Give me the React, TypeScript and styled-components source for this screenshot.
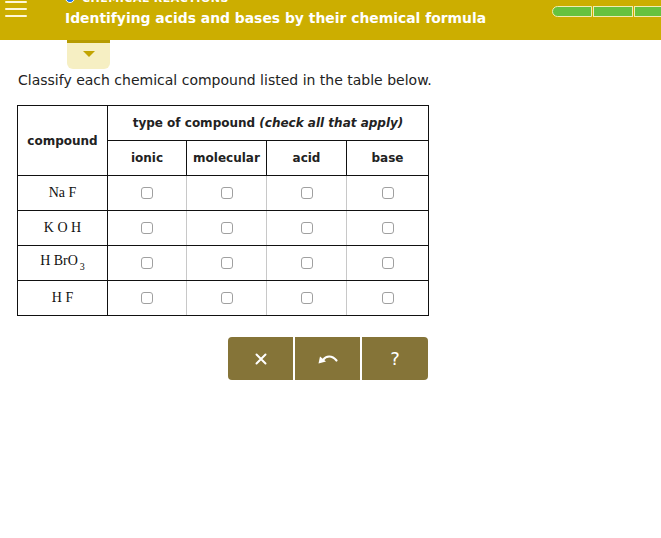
import React from "react";
import styled, { createGlobalStyle } from "styled-components";

const Global = createGlobalStyle`
  html, body { margin: 0; padding: 0; background: #fff; }
  body { font-family: "DejaVu Sans", Verdana, sans-serif; color: #222; }
`;

const Page = styled.div`
  width: 661px;
  height: 538px;
  display: flex;
  flex-direction: column;
  overflow: hidden;
`;

const Header = styled.header`
  height: 40px;
  background: #ccae00;
  display: flex;
  overflow: hidden;
  position: relative;
`;

const Burger = styled.div`
  width: 22px;
  padding: 1px 0 0 5px;
  display: flex;
  flex-direction: column;
  gap: 5px;
  & > span {
    display: block;
    height: 2px;
    background: #fff8d8;
    border-radius: 1px;
  }
`;

const TitleBlock = styled.div`
  margin-left: 38px;
  margin-top: -9px;
  display: flex;
  flex-direction: column;
`;

const Topic = styled.div`
  display: flex;
  align-items: center;
  gap: 7px;
  color: #fff;
  font-size: 11px;
  font-weight: bold;
  letter-spacing: 0.5px;
  height: 14px;
`;

const Dot = styled.span`
  width: 10px;
  height: 10px;
  border-radius: 50%;
  background: #1a73e8;
  border: 1px solid #fff;
  box-sizing: border-box;
`;

const Title = styled.div`
  color: #fff;
  font-size: 13.9px;
  font-weight: bold;
  margin-top: 5px;
`;

const Progress = styled.div`
  position: absolute;
  left: 552px;
  top: 6px;
  display: flex;
  gap: 1px;
`;

const Seg = styled.span<{ $first?: boolean }>`
  width: 38px;
  height: 9px;
  background: #66c23f;
  border: 1px solid #f3ecb0;
  border-radius: ${(p) => (p.$first ? "6px 0 0 6px" : "0")};
`;

const Tab = styled.div`
  margin-left: 67px;
  width: 43px;
  height: 29px;
  background: #f6efc3;
  border-top: 3px solid #b69b00;
  box-sizing: border-box;
  border-radius: 0 0 6px 6px;
  display: flex;
  justify-content: center;
  padding-top: 8px;
`;

const Tri = styled.span`
  width: 0;
  height: 0;
  border-left: 6px solid transparent;
  border-right: 6px solid transparent;
  border-top: 6px solid #c2a400;
`;

const Content = styled.main`
  padding: 2px 0 0 17px;
  display: flex;
  flex-direction: column;
`;

const Prompt = styled.p`
  margin: 0 0 16px 1px;
  font-size: 14px;
  color: #222;
  line-height: 18px;
`;

const Table = styled.table`
  border-collapse: collapse;
  border: 1px solid #111;
  width: 411px;
  table-layout: fixed;
`;

const Col = styled.col<{ $w: number }>`
  width: ${(p) => p.$w}px;
`;

const Th = styled.th<{ $dark?: boolean }>`
  font-size: 12px;
  font-weight: bold;
  color: #222;
  height: 34px;
  padding: 0;
  text-align: center;
  border: 1px solid #111;
  border-left-color: ${(p) => (p.$dark === false ? "#c8c8c8" : "#111")};
  & em { font-style: italic; }
`;

const Td = styled.td<{ $first?: boolean }>`
  height: 34px;
  padding: 0;
  text-align: center;
  border-top: 1px solid #111;
  border-bottom: 1px solid #111;
  border-left: 1px solid ${(p) => (p.$first ? "#111" : "#c8c8c8")};
`;

const Formula = styled.span`
  font-family: "Liberation Serif", "Times New Roman", serif;
  font-size: 14px;
  color: #111;
  position: relative;
  top: -2px;
  & sub { font-size: 10px; vertical-align: -5px; margin-left: 2px; }
`;

const Check = styled.span`
  display: inline-block;
  width: 12px;
  height: 12px;
  border: 1px solid #a0a0a0;
  border-radius: 3px;
  vertical-align: middle;
  box-sizing: border-box;
  position: relative;
  top: -1px;
`;

const Buttons = styled.div`
  margin: 21px 0 0 211px;
  display: flex;
  gap: 2px;
`;

const Btn = styled.button<{ $pos: "l" | "m" | "r" }>`
  width: ${(p) => (p.$pos === "r" ? 66 : 65)}px;
  height: 43px;
  border: none;
  background: #857438;
  color: #fff;
  display: flex;
  align-items: center;
  justify-content: center;
  padding: 0;
  border-radius: ${(p) =>
    p.$pos === "l" ? "4px 0 0 4px" : p.$pos === "r" ? "0 4px 4px 0" : "0"};
`;

const Q = styled.span`
  font-family: "DejaVu Sans", sans-serif;
  font-size: 18px;
  color: #fff;
`;

const rows: React.ReactNode[] = [
  <>Na F</>,
  <>K O H</>,
  <>H BrO<sub>3</sub></>,
  <>H F</>,
];

export default function App() {
  return (
    <>
      <Global />
      <Page>
        <Header>
          <Burger>
            <span />
            <span />
            <span />
          </Burger>
          <TitleBlock>
            <Topic>
              <Dot />
              CHEMICAL REACTIONS
            </Topic>
            <Title>Identifying acids and bases by their chemical formula</Title>
          </TitleBlock>
          <Progress>
            <Seg $first />
            <Seg />
            <Seg />
          </Progress>
        </Header>
        <Tab>
          <Tri />
        </Tab>
        <Content>
          <Prompt>Classify each chemical compound listed in the table below.</Prompt>
          <Table>
            <colgroup>
              <Col $w={90} />
              <Col $w={79} />
              <Col $w={80} />
              <Col $w={80} />
              <Col $w={82} />
            </colgroup>
            <thead>
              <tr>
                <Th rowSpan={2}>compound</Th>
                <Th colSpan={4}>
                  type of compound <em>(check all that apply)</em>
                </Th>
              </tr>
              <tr>
                <Th>ionic</Th>
                <Th $dark={false}>molecular</Th>
                <Th $dark={false}>acid</Th>
                <Th $dark={false}>base</Th>
              </tr>
            </thead>
            <tbody>
              {rows.map((f, i) => (
                <tr key={i}>
                  <Td $first>
                    <Formula>{f}</Formula>
                  </Td>
                  {[0, 1, 2, 3].map((j) => (
                    <Td key={j} $first={j === 0}>
                      <Check />
                    </Td>
                  ))}
                </tr>
              ))}
            </tbody>
          </Table>
          <Buttons>
            <Btn $pos="l" aria-label="clear">
              <svg width="12" height="12" viewBox="0 0 12 12">
                <path d="M1.5 1.5 L10.5 10.5 M10.5 1.5 L1.5 10.5" stroke="#fff" strokeWidth="2" strokeLinecap="round" />
              </svg>
            </Btn>
            <Btn $pos="m" aria-label="undo">
              <svg width="22" height="12" viewBox="0 0 22 12">
                <path d="M6 7 C9 2.5 15 2 19.5 7.5" stroke="#fff" strokeWidth="2.2" fill="none" strokeLinecap="round" />
                <path d="M1.5 10.5 L3 3.5 L9 8.5 Z" fill="#fff" />
              </svg>
            </Btn>
            <Btn $pos="r" aria-label="help">
              <Q>?</Q>
            </Btn>
          </Buttons>
        </Content>
      </Page>
    </>
  );
}
